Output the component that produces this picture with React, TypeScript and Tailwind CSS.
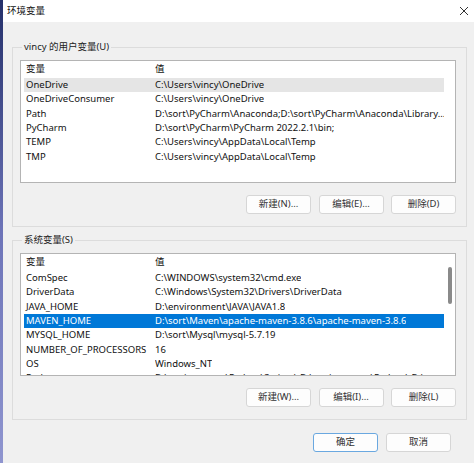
const userVars = [
  { name: "OneDrive", value: "C:\\Users\\vincy\\OneDrive" },
  { name: "OneDriveConsumer", value: "C:\\Users\\vincy\\OneDrive" },
  { name: "Path", value: "D:\\sort\\PyCharm\\Anaconda;D:\\sort\\PyCharm\\Anaconda\\Library..." },
  { name: "PyCharm", value: "D:\\sort\\PyCharm\\PyCharm 2022.2.1\\bin;" },
  { name: "TEMP", value: "C:\\Users\\vincy\\AppData\\Local\\Temp" },
  { name: "TMP", value: "C:\\Users\\vincy\\AppData\\Local\\Temp" },
];

const sysVars = [
  { name: "ComSpec", value: "C:\\WINDOWS\\system32\\cmd.exe" },
  { name: "DriverData", value: "C:\\Windows\\System32\\Drivers\\DriverData" },
  { name: "JAVA_HOME", value: "D:\\environment\\JAVA\\JAVA1.8" },
  { name: "MAVEN_HOME", value: "D:\\sort\\Maven\\apache-maven-3.8.6\\apache-maven-3.8.6" },
  { name: "MYSQL_HOME", value: "D:\\sort\\Mysql\\mysql-5.7.19" },
  { name: "NUMBER_OF_PROCESSORS", value: "16" },
  { name: "OS", value: "Windows_NT" },
  { name: "Path", value: "D:\\environment\\Python\\Scripts\\;D:\\environment\\Python\\;D:\\..." },
];

type Row = { name: string; value: string };

function Btn({ label, primary }: { label: string; primary?: boolean }) {
  return (
    <div
      className={`flex h-[19px] w-[65px] items-center justify-center rounded-[3px] border bg-[#fdfdfd] text-[9.5px] text-[#333] ${primary ? "border-[#6aa8e0]" : "border-[#d6d6d6]"}`}
    >
      {label}
    </div>
  );
}

function VarList({
  rows,
  active,
  selected,
  scroll,
}: {
  rows: Row[];
  active?: string;
  selected?: string;
  scroll?: boolean;
}) {
  return (
    <div className="flex h-[123px] overflow-hidden border border-[#b4b4b4] bg-white">
      <div className="flex w-[423px] flex-col pl-[3px]">
        <div className="flex h-[17px] shrink-0 items-center text-[9.5px]">
          <span className="w-[131px] pl-[2px]">变量</span>
          <span>值</span>
        </div>
        {rows.map((r) => {
          const isActive = r.name === active;
          const isSel = r.name === selected;
          return (
            <div
              key={r.name + r.value}
              className={`flex h-[14.33px] shrink-0 items-center whitespace-nowrap text-[9.5px] ${isActive ? "bg-[#0078d7] text-white" : isSel ? "bg-[#e5e5e5]" : ""}`}
            >
              <span className="w-[131px] shrink-0 pl-[2px]">{r.name}</span>
              <span className="overflow-hidden">{r.value}</span>
            </div>
          );
        })}
      </div>
      <div className="flex flex-1 justify-center pt-[13px]">
        {scroll && <div className="h-[37px] w-[4px] rounded-full bg-[#8a8a8a]" />}
      </div>
    </div>
  );
}

function Group({
  title,
  children,
  buttons,
}: {
  title: string;
  children: React.ReactNode;
  buttons: string[];
}) {
  return (
    <fieldset className="ml-[9px] mr-[7px] border border-[#dcdcdc] pb-[12px] pl-[7px] pr-[10px]">
      <legend className="ml-[2px] px-[2px] text-[9.5px] leading-[14px] text-[#222]">{title}</legend>
      <div className="mt-[6px]">{children}</div>
      <div className="mt-[12px] flex justify-end gap-[7.5px]">
        {buttons.map((b) => (
          <Btn key={b} label={b} />
        ))}
      </div>
    </fieldset>
  );
}

export default function App() {
  return (
    <div
      className="flex h-[463px] w-[474px] overflow-hidden bg-[#f0f0f0] text-[#111]"
      style={{ fontFamily: '"Segoe UI", "Noto Sans", "Noto Sans CJK SC", sans-serif' }}
    >
      <div className="w-[3px] shrink-0 bg-gradient-to-b from-[#25306a] via-[#6d74b8] to-[#8f95cf]" />
      <div className="flex flex-1 flex-col">
        <div className="flex h-[22px] shrink-0 items-center justify-between bg-white pl-[4px] pr-[5px]">
          <span className="text-[9.5px]">环境变量</span>
          <svg width="10" height="10" viewBox="0 0 10 10" className="mb-[1px]">
            <path d="M1 1 L9 9 M9 1 L1 9" stroke="#333" strokeWidth="1" />
          </svg>
        </div>
        <div className="flex flex-1 flex-col pt-[18px]">
          <Group title="vincy 的用户变量(U)" buttons={["新建(N)...", "编辑(E)...", "删除(D)"]}>
            <VarList rows={userVars} selected="OneDrive" />
          </Group>
          <div className="h-[6px]" />
          <Group title="系统变量(S)" buttons={["新建(W)...", "编辑(I)...", "删除(L)"]}>
            <VarList rows={sysVars} active="MAVEN_HOME" scroll />
          </Group>
          <div className="mr-[23px] mt-[13px] flex justify-end gap-[8px]">
            <Btn label="确定" primary />
            <Btn label="取消" />
          </div>
        </div>
      </div>
    </div>
  );
}
